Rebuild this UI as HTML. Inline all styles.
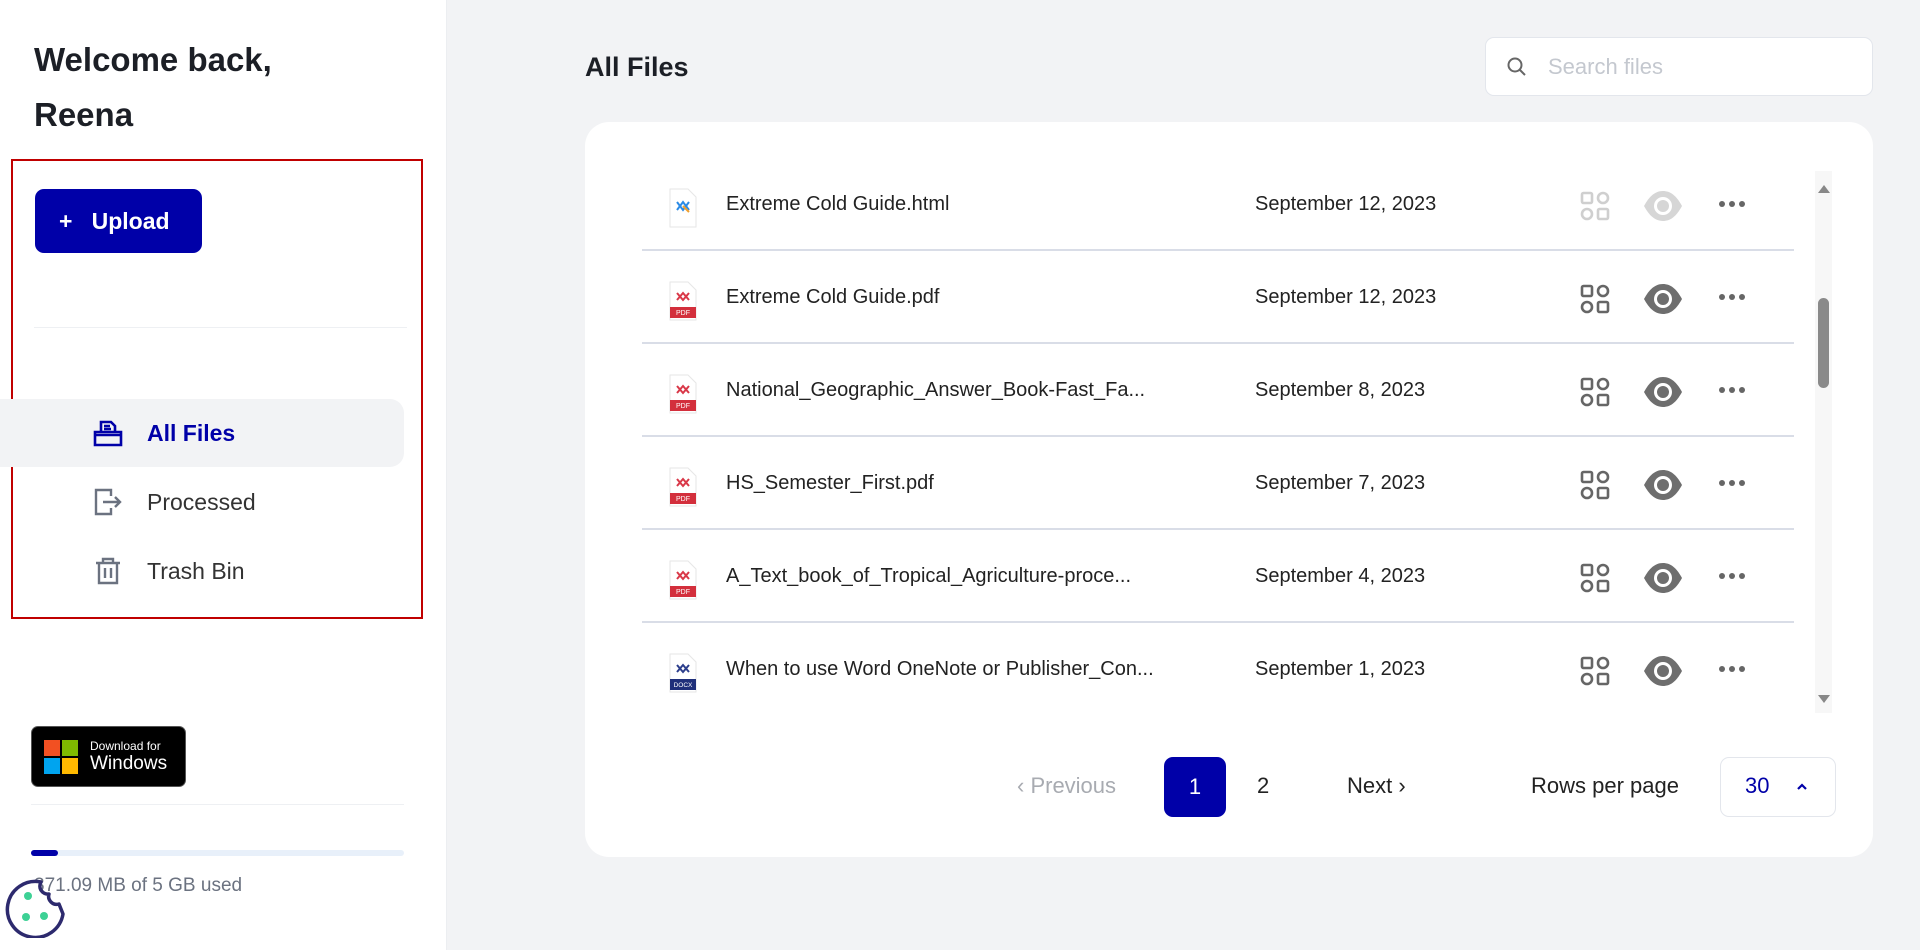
<!DOCTYPE html>
<html><head><meta charset="utf-8"><style>
*{margin:0;padding:0;box-sizing:border-box}
body{width:1920px;height:950px;background:#f2f3f5;font-family:"Liberation Sans",Arial,sans-serif;position:relative;overflow:hidden;color:#222}
.abs{position:absolute}
#side{left:0;top:0;width:447px;height:950px;background:#fff;border-right:1px solid #eceef1}
.nav{position:absolute;left:0;display:flex;align-items:center;font-size:23px;color:#333}
.row{position:absolute;left:642px;width:1152px;height:93px;border-bottom:2px solid #d9dde7}
.row .ic{position:absolute;left:25px;top:30px}
.row .nm{position:absolute;left:84px;top:0;line-height:93px;font-size:20px;color:#222}
.row .dt{position:absolute;left:613px;top:0;line-height:93px;font-size:20px;color:#222}
.row .g{position:absolute;left:938px;top:33px}
.row .e{position:absolute;left:1000px;top:31px}
.row .d{position:absolute;left:1076px;top:42px}
</style></head><body>
<div id="side" class="abs"></div>
<div class="abs" style="left:34px;top:32px;font-size:33px;font-weight:bold;line-height:55px;color:#1c1f26">Welcome back,<br>Reena</div>
<div class="abs" style="left:11px;top:159px;width:412px;height:460px;border:2.5px solid #c00000"></div>
<div class="abs" style="left:35px;top:189px;width:167px;height:64px;background:#0000a8;border-radius:9px;color:#fff;font-weight:bold;font-size:23px;line-height:64px;padding-left:24px">+&nbsp;&nbsp; Upload</div>
<div class="abs" style="left:34px;top:327px;width:373px;height:1px;background:#eef0f3"></div>
<div class="abs" style="left:0;top:399px;width:404px;height:68px;background:#f2f3f5;border-radius:0 14px 14px 0"></div>
<div class="nav" style="top:415px;left:93px;height:36px;color:#0000a8;font-weight:bold">
<svg width="30" height="30" viewBox="0 0 30 30" fill="none" stroke="#0000a8" stroke-width="2.6"><path d="M8 14V4h10l4 4v6"/><path d="M11 8h6M11 11h7"/><path d="M2 14h26v13H2z"/><path d="M2 17h26"/></svg>
<span style="margin-left:24px">All Files</span></div>
<div class="nav" style="top:484px;left:93px;height:36px">
<svg width="30" height="30" viewBox="0 0 30 30" fill="none" stroke="#6b7280" stroke-width="2.4"><path d="M18 9V3H3v24h15v-6"/><path d="M10 15h17M22 10l5 5-5 5"/></svg>
<span style="margin-left:24px">Processed</span></div>
<div class="nav" style="top:553px;left:93px;height:36px">
<svg width="30" height="30" viewBox="0 0 30 30" fill="none" stroke="#6b7280" stroke-width="2.4"><path d="M3 7h24M10 7V3h10v4M6 7v20h18V7M12 12v10M18 12v10"/></svg>
<span style="margin-left:24px">Trash Bin</span></div>
<div class="abs" style="left:31px;top:726px;width:155px;height:61px;background:#000;border-radius:7px;border:1px solid #555">
<div class="abs" style="left:12px;top:13px;width:16px;height:16px;background:#f25022"></div>
<div class="abs" style="left:30px;top:13px;width:16px;height:16px;background:#7fba00"></div>
<div class="abs" style="left:12px;top:31px;width:16px;height:16px;background:#00a4ef"></div>
<div class="abs" style="left:30px;top:31px;width:16px;height:16px;background:#ffb900"></div>
<div class="abs" style="left:58px;top:12px;color:#fff;font-size:12px">Download for</div>
<div class="abs" style="left:58px;top:26px;color:#fff;font-size:19px">Windows</div></div>
<div class="abs" style="left:31px;top:804px;width:373px;height:1px;background:#eef0f3"></div>
<div class="abs" style="left:31px;top:850px;width:373px;height:6px;background:#e8f0fa;border-radius:3px"></div>
<div class="abs" style="left:31px;top:850px;width:27px;height:6px;background:#0000a8;border-radius:3px"></div>
<div class="abs" style="left:34px;top:875px;font-size:19px;color:#6b7280">371.09 MB of 5 GB used</div>
<svg class="abs" style="left:4px;top:874px" width="64" height="64" viewBox="0 0 64 64"><path d="M55 30a8 8 0 0 1-10-10 8 8 0 0 1-8-12A28 28 0 1 0 59 40z" fill="#fff" stroke="#2d2a6e" stroke-width="3.5" stroke-linejoin="round"/><circle cx="24" cy="22" r="4" fill="#3dd195"/><circle cx="22" cy="43" r="4" fill="#3dd195"/><circle cx="40" cy="42" r="4" fill="#3dd195"/></svg>

<div class="abs" style="left:585px;top:52px;font-size:27px;font-weight:bold;color:#1c1f26">All Files</div>
<div class="abs" style="left:1485px;top:37px;width:388px;height:59px;background:#fff;border:1px solid #e3e6ec;border-radius:9px">
<svg class="abs" style="left:20px;top:18px" width="22" height="22" viewBox="0 0 22 22" fill="none" stroke="#666" stroke-width="2"><circle cx="9" cy="9" r="6.5"/><path d="M14 14l5 5"/></svg>
<div class="abs" style="left:62px;top:16px;font-size:22px;color:#c4c8cf">Search files</div></div>
<div class="abs" style="left:585px;top:122px;width:1288px;height:735px;background:#fff;border-radius:24px"></div>

<div class="abs" style="left:600px;top:171px;width:1240px;height:542px;overflow:hidden">
<div style="position:absolute;left:-600px;top:-171px;width:1920px;height:950px">
<!--rows-->
<div class="row" style="top:158px">
<svg class="ic" width="32" height="40" viewBox="0 0 32 40"><path d="M3 1h18l8 8v30H3z" fill="#fff" stroke="#e6e6e6"/><path d="M10 14l6 8 6-8M10 22l6-8 6 8" fill="none" stroke="#2b8be6" stroke-width="2"/><path d="M16 18l6 6" stroke="#f0a030" stroke-width="2"/></svg>
<div class="nm">Extreme Cold Guide.html</div><div class="dt">September 12, 2023</div>
<svg class="g" width="30" height="30" viewBox="0 0 30 30" fill="none" stroke="#cfcfcf" stroke-width="2.6"><rect x="2" y="2" width="10" height="10" rx="1.5"/><circle cx="23" cy="7" r="5"/><circle cx="7" cy="23" r="5"/><rect x="18" y="18" width="10" height="10" rx="1.5"/></svg>
<svg class="e" width="42" height="34" viewBox="0 0 42 34"><path d="M2 17C8 6 14 2 21 2s13 4 19 15c-6 11-12 15-19 15S8 28 2 17z" fill="#d6d6d6"/><circle cx="21" cy="17" r="9" fill="#fff"/><circle cx="21" cy="17" r="6" fill="#d6d6d6"/></svg>
<svg class="d" width="28" height="8" viewBox="0 0 28 8" fill="#666"><circle cx="4" cy="4" r="3"/><circle cx="14" cy="4" r="3"/><circle cx="24" cy="4" r="3"/></svg></div>

<div class="row" style="top:251px">
<svg class="ic" width="32" height="40" viewBox="0 0 32 40"><path d="M3 1h18l8 8v30H3z" fill="#fff" stroke="#e6e6e6"/><path d="M10 12l6 7 6-7M10 19l6-7 6 7" fill="none" stroke="#d93848" stroke-width="2"/><rect x="3" y="26" width="26" height="11" fill="#d32f3c"/><text x="16" y="34" font-size="7" fill="#fff" text-anchor="middle" font-family="Liberation Sans">PDF</text></svg>
<div class="nm">Extreme Cold Guide.pdf</div><div class="dt">September 12, 2023</div>
<svg class="g" width="30" height="30" viewBox="0 0 30 30" fill="none" stroke="#666" stroke-width="2.6"><rect x="2" y="2" width="10" height="10" rx="1.5"/><circle cx="23" cy="7" r="5"/><circle cx="7" cy="23" r="5"/><rect x="18" y="18" width="10" height="10" rx="1.5"/></svg>
<svg class="e" width="42" height="34" viewBox="0 0 42 34"><path d="M2 17C8 6 14 2 21 2s13 4 19 15c-6 11-12 15-19 15S8 28 2 17z" fill="#6e6e6e"/><circle cx="21" cy="17" r="9" fill="#fff"/><circle cx="21" cy="17" r="6" fill="#6e6e6e"/></svg>
<svg class="d" width="28" height="8" viewBox="0 0 28 8" fill="#666"><circle cx="4" cy="4" r="3"/><circle cx="14" cy="4" r="3"/><circle cx="24" cy="4" r="3"/></svg></div>

<div class="row" style="top:344px">
<svg class="ic" width="32" height="40" viewBox="0 0 32 40"><path d="M3 1h18l8 8v30H3z" fill="#fff" stroke="#e6e6e6"/><path d="M10 12l6 7 6-7M10 19l6-7 6 7" fill="none" stroke="#d93848" stroke-width="2"/><rect x="3" y="26" width="26" height="11" fill="#d32f3c"/><text x="16" y="34" font-size="7" fill="#fff" text-anchor="middle" font-family="Liberation Sans">PDF</text></svg>
<div class="nm">National_Geographic_Answer_Book-Fast_Fa...</div><div class="dt">September 8, 2023</div>
<svg class="g" width="30" height="30" viewBox="0 0 30 30" fill="none" stroke="#666" stroke-width="2.6"><rect x="2" y="2" width="10" height="10" rx="1.5"/><circle cx="23" cy="7" r="5"/><circle cx="7" cy="23" r="5"/><rect x="18" y="18" width="10" height="10" rx="1.5"/></svg>
<svg class="e" width="42" height="34" viewBox="0 0 42 34"><path d="M2 17C8 6 14 2 21 2s13 4 19 15c-6 11-12 15-19 15S8 28 2 17z" fill="#6e6e6e"/><circle cx="21" cy="17" r="9" fill="#fff"/><circle cx="21" cy="17" r="6" fill="#6e6e6e"/></svg>
<svg class="d" width="28" height="8" viewBox="0 0 28 8" fill="#666"><circle cx="4" cy="4" r="3"/><circle cx="14" cy="4" r="3"/><circle cx="24" cy="4" r="3"/></svg></div>

<div class="row" style="top:437px">
<svg class="ic" width="32" height="40" viewBox="0 0 32 40"><path d="M3 1h18l8 8v30H3z" fill="#fff" stroke="#e6e6e6"/><path d="M10 12l6 7 6-7M10 19l6-7 6 7" fill="none" stroke="#d93848" stroke-width="2"/><rect x="3" y="26" width="26" height="11" fill="#d32f3c"/><text x="16" y="34" font-size="7" fill="#fff" text-anchor="middle" font-family="Liberation Sans">PDF</text></svg>
<div class="nm">HS_Semester_First.pdf</div><div class="dt">September 7, 2023</div>
<svg class="g" width="30" height="30" viewBox="0 0 30 30" fill="none" stroke="#666" stroke-width="2.6"><rect x="2" y="2" width="10" height="10" rx="1.5"/><circle cx="23" cy="7" r="5"/><circle cx="7" cy="23" r="5"/><rect x="18" y="18" width="10" height="10" rx="1.5"/></svg>
<svg class="e" width="42" height="34" viewBox="0 0 42 34"><path d="M2 17C8 6 14 2 21 2s13 4 19 15c-6 11-12 15-19 15S8 28 2 17z" fill="#6e6e6e"/><circle cx="21" cy="17" r="9" fill="#fff"/><circle cx="21" cy="17" r="6" fill="#6e6e6e"/></svg>
<svg class="d" width="28" height="8" viewBox="0 0 28 8" fill="#666"><circle cx="4" cy="4" r="3"/><circle cx="14" cy="4" r="3"/><circle cx="24" cy="4" r="3"/></svg></div>

<div class="row" style="top:530px">
<svg class="ic" width="32" height="40" viewBox="0 0 32 40"><path d="M3 1h18l8 8v30H3z" fill="#fff" stroke="#e6e6e6"/><path d="M10 12l6 7 6-7M10 19l6-7 6 7" fill="none" stroke="#d93848" stroke-width="2"/><rect x="3" y="26" width="26" height="11" fill="#d32f3c"/><text x="16" y="34" font-size="7" fill="#fff" text-anchor="middle" font-family="Liberation Sans">PDF</text></svg>
<div class="nm">A_Text_book_of_Tropical_Agriculture-proce...</div><div class="dt">September 4, 2023</div>
<svg class="g" width="30" height="30" viewBox="0 0 30 30" fill="none" stroke="#666" stroke-width="2.6"><rect x="2" y="2" width="10" height="10" rx="1.5"/><circle cx="23" cy="7" r="5"/><circle cx="7" cy="23" r="5"/><rect x="18" y="18" width="10" height="10" rx="1.5"/></svg>
<svg class="e" width="42" height="34" viewBox="0 0 42 34"><path d="M2 17C8 6 14 2 21 2s13 4 19 15c-6 11-12 15-19 15S8 28 2 17z" fill="#6e6e6e"/><circle cx="21" cy="17" r="9" fill="#fff"/><circle cx="21" cy="17" r="6" fill="#6e6e6e"/></svg>
<svg class="d" width="28" height="8" viewBox="0 0 28 8" fill="#666"><circle cx="4" cy="4" r="3"/><circle cx="14" cy="4" r="3"/><circle cx="24" cy="4" r="3"/></svg></div>

<div class="row" style="top:623px">
<svg class="ic" width="32" height="40" viewBox="0 0 32 40"><path d="M3 1h18l8 8v30H3z" fill="#fff" stroke="#e6e6e6"/><path d="M10 12l6 7 6-7M10 19l6-7 6 7" fill="none" stroke="#2c3e8c" stroke-width="2"/><rect x="3" y="26" width="26" height="11" fill="#1f2f7a"/><text x="16" y="34" font-size="6.5" fill="#fff" text-anchor="middle" font-family="Liberation Sans">DOCX</text></svg>
<div class="nm">When to use Word OneNote or Publisher_Con...</div><div class="dt">September 1, 2023</div>
<svg class="g" width="30" height="30" viewBox="0 0 30 30" fill="none" stroke="#666" stroke-width="2.6"><rect x="2" y="2" width="10" height="10" rx="1.5"/><circle cx="23" cy="7" r="5"/><circle cx="7" cy="23" r="5"/><rect x="18" y="18" width="10" height="10" rx="1.5"/></svg>
<svg class="e" width="42" height="34" viewBox="0 0 42 34"><path d="M2 17C8 6 14 2 21 2s13 4 19 15c-6 11-12 15-19 15S8 28 2 17z" fill="#6e6e6e"/><circle cx="21" cy="17" r="9" fill="#fff"/><circle cx="21" cy="17" r="6" fill="#6e6e6e"/></svg>
<svg class="d" width="28" height="8" viewBox="0 0 28 8" fill="#666"><circle cx="4" cy="4" r="3"/><circle cx="14" cy="4" r="3"/><circle cx="24" cy="4" r="3"/></svg></div>
</div></div>
<!-- scrollbar -->
<div class="abs" style="left:1815px;top:171px;width:17px;height:542px;background:#f7f7f7"></div>
<div class="abs" style="left:1818px;top:185px;width:0;height:0;border-left:6px solid transparent;border-right:6px solid transparent;border-bottom:8px solid #888"></div>
<div class="abs" style="left:1818px;top:695px;width:0;height:0;border-left:6px solid transparent;border-right:6px solid transparent;border-top:8px solid #888"></div>
<div class="abs" style="left:1818px;top:298px;width:11px;height:90px;background:#8a8a8a;border-radius:6px"></div>
<!-- pagination -->
<div class="abs" style="left:1017px;top:773px;font-size:22px;color:#a8abb1">‹ Previous</div>
<div class="abs" style="left:1164px;top:757px;width:62px;height:60px;background:#0000a8;border-radius:9px;color:#fff;font-size:22px;text-align:center;line-height:60px">1</div>
<div class="abs" style="left:1257px;top:773px;font-size:22px;color:#222">2</div>
<div class="abs" style="left:1347px;top:773px;font-size:22px;color:#222">Next ›</div>
<div class="abs" style="left:1531px;top:773px;font-size:22px;color:#222">Rows per page</div>
<div class="abs" style="left:1720px;top:757px;width:116px;height:60px;border:1px solid #e3e6ec;border-radius:9px;background:#fff">
<div class="abs" style="left:24px;top:15px;font-size:22px;color:#0000a8">30</div>
<svg class="abs" style="left:75px;top:24px" width="12" height="10" viewBox="0 0 12 10" fill="none" stroke="#0000a8" stroke-width="2.2"><path d="M2 7l4-4 4 4"/></svg></div>
</body></html>
